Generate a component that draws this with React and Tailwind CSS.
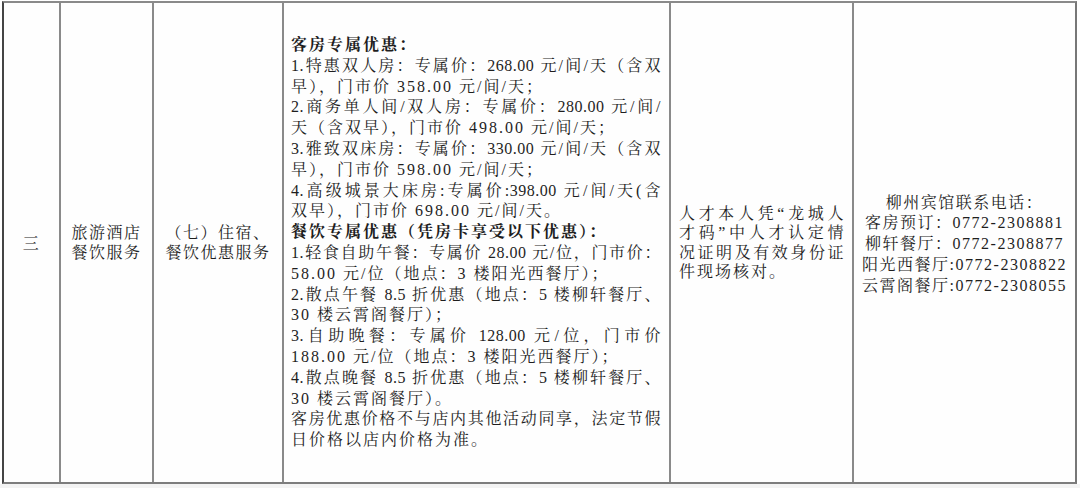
import React from "react";

const font = {
  fontFamily:
    '"Liberation Serif", "Noto Serif CJK SC", "Noto Sans CJK SC", serif',
};

// [text, justifyToEdge, bold]
const offerLines = [
  ["客房专属优惠：", false, true],
  ["1.特惠双人房：专属价：268.00 元/间/天（含双", true],
  ["早），门市价 358.00 元/间/天；", false],
  ["2.商务单人间/双人房：专属价：280.00 元/间/", true],
  ["天（含双早），门市价 498.00 元/间/天；", false],
  ["3.雅致双床房：专属价：330.00 元/间/天（含双", true],
  ["早），门市价 598.00 元/间/天；", false],
  ["4.高级城景大床房:专属价:398.00 元/间/天(含", true],
  ["双早），门市价 698.00 元/间/天。", false],
  ["餐饮专属优惠（凭房卡享受以下优惠）：", false, true],
  ["1.轻食自助午餐：专属价 28.00 元/位，门市价：", true],
  ["58.00 元/位（地点：3 楼阳光西餐厅）；", false],
  ["2.散点午餐 8.5 折优惠（地点：5 楼柳轩餐厅、", true],
  ["30 楼云霄阁餐厅）；", false],
  ["3.自助晚餐：专属价 128.00 元/位，门市价", true],
  ["188.00 元/位（地点：3 楼阳光西餐厅）；", false],
  ["4.散点晚餐 8.5 折优惠（地点：5 楼柳轩餐厅、", true],
  ["30 楼云霄阁餐厅）。", false],
  ["客房优惠价格不与店内其他活动同享，法定节假", true],
  ["日价格以店内价格为准。", false],
];

const proofLines = [
  ["人才本人凭“龙城人", true],
  ["才码”中人才认定情", true],
  ["况证明及有效身份证", true],
  ["件现场核对。", false],
];

const phones = [
  "柳州宾馆联系电话：",
  "客房预订：0772-2308881",
  "柳轩餐厅：0772-2308877",
  "阳光西餐厅:0772-2308822",
  "云霄阁餐厅:0772-2308055",
];

// full lines are stretched to both edges, so they keep a tighter base spacing
function Line({ text, full, bold }) {
  return (
    <div
      className={
        "whitespace-nowrap " +
        (full ? "text-justify [text-align-last:justify] tracking-[0.5px] " : "") +
        (bold ? "font-bold" : "")
      }
    >
      {text}
    </div>
  );
}

export default function App() {
  return (
    <div
      className="w-[1080px] h-[488px] bg-[#f3f3f3] text-[#1e1e1e] text-[16px] tracking-[1.5px]"
      style={font}
    >
      <div className="bg-white h-[484px] pt-px pl-[2px]">
        <div className="flex w-[1075px] h-[483px] border-t-2 border-b-2 border-r-2 border-l-2 border-t-[#8a8a8a] border-b-[#7d7d7d] border-r-[#777] border-l-[#444] bg-[#fefefe]">
          <div className="w-[57px] flex items-center justify-center border-r-2 border-[#8a8a8a] pt-[3px]">
            三
          </div>
          <div className="w-[93px] flex flex-col items-center justify-center border-r-2 border-[#8a8a8a] leading-[20px]">
            <div>旅游酒店</div>
            <div>餐饮服务</div>
          </div>
          <div className="w-[130px] flex flex-col items-center justify-center border-r-2 border-[#8a8a8a] leading-[20px]">
            <div>（七）住宿、</div>
            <div>餐饮优惠服务</div>
          </div>
          <div className="w-[387px] flex flex-col justify-center border-r-2 border-[#8a8a8a] pl-[7px] pr-[8px] leading-[20.8px] pt-px tracking-[2px]">
            {offerLines.map(([text, full, bold], i) => (
              <Line key={i} text={text} full={full} bold={bold} />
            ))}
          </div>
          <div className="w-[183px] flex flex-col justify-center border-r-2 border-[#8a8a8a] pl-[8px] pr-[8px] leading-[19.2px] tracking-[2px]">
            {proofLines.map(([text, full], i) => (
              <Line key={i} text={text} full={full} />
            ))}
          </div>
          <div className="flex-1 flex flex-col items-center justify-center leading-[20.8px] pt-[4px]">
            {phones.map((p) => (
              <div key={p} className="whitespace-nowrap">
                {p}
              </div>
            ))}
          </div>
        </div>
      </div>
    </div>
  );
}
